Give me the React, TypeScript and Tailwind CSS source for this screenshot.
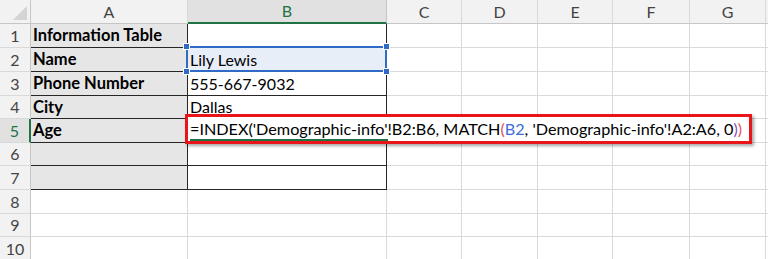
import React from "react";

const cols = ["A", "B", "C", "D", "E", "F", "G"];
const colW = [31, 157, 199, 75, 76, 75, 77, 76, 2];
const rowH = [24, 24, 24, 24, 23, 24, 23, 24, 24, 23, 24];

const aText: Record<number, string> = {
  1: "Information Table",
  2: "Name",
  3: "Phone Number",
  4: "City",
  5: "Age",
};
const bText: Record<number, string> = {
  2: "Lily Lewis",
  3: "555-667-9032",
  4: "Dallas",
};

const font = { fontFamily: "Lato, 'Liberation Sans', sans-serif" };

function Handle({ cls }: { cls: string }) {
  return <div className={`absolute w-[7px] h-[7px] bg-[#2f6bc6] border border-white ${cls}`} />;
}

export default function App() {
  const gridCols = colW.map((w) => `${w}px`).join(" ");
  const gridRows = rowH.map((h) => `${h}px`).join(" ");
  const cells: React.ReactNode[] = [];

  cells.push(
    <div key="corner" className="relative bg-[#f2f2f2] border-r border-b border-[#c6c6c6]">
      <div className="absolute right-[3px] bottom-[3px] w-0 h-0 border-l-[14px] border-l-transparent border-b-[14px] border-b-[#d4d4d4]" />
    </div>
  );
  for (let c = 0; c < 7; c++) {
    const sel = c === 1;
    cells.push(
      <div
        key={`h${c}`}
        className={`flex items-center justify-center text-[16px] border-r ${
          sel
            ? "bg-[#e1e1e1] text-[#217346] border-b-2 border-b-[#217346] border-r-[#c6c6c6]"
            : "bg-[#f2f2f2] text-[#444] border-b border-b-[#c6c6c6] border-r-[#d9d9d9]"
        }`}
      >
        {cols[c]}
      </div>
    );
  }
  cells.push(<div key="hx" className="bg-[#f2f2f2] border-b border-[#c6c6c6]" />);

  for (let r = 1; r <= 10; r++) {
    const sel = r === 5;
    cells.push(
      <div
        key={`r${r}`}
        className={`flex items-center justify-center text-[16px] border-b ${
          sel
            ? "bg-[#e1e1e1] text-[#217346] border-r-2 border-r-[#217346] border-b-[#d9d9d9]"
            : "bg-[#f2f2f2] text-[#444] border-r border-r-[#c6c6c6] border-b-[#d9d9d9]"
        }`}
      >
        {r}
      </div>
    );
    const inTable = r <= 7;
    cells.push(
      <div
        key={`a${r}`}
        className={`flex items-center pl-[2px] text-[16.5px] font-bold text-black whitespace-nowrap overflow-hidden ${
          inTable ? "bg-[#e7e6e6] border-r border-b border-[#262626]" : "border-r border-b border-[#dadada]"
        }`}
      >
        {aText[r] ?? ""}
      </div>
    );
    cells.push(
      <div
        key={`b${r}`}
        className={`flex items-center pl-[2px] text-[16px] text-black whitespace-nowrap ${
          inTable ? "border-r border-b border-[#262626]" : "border-r border-b border-[#dadada]"
        } ${r === 2 ? "bg-[#e8eef8]" : ""}`}
      >
        {bText[r] ?? ""}
      </div>
    );
    for (let c = 2; c < 7; c++) {
      cells.push(<div key={`c${r}-${c}`} className="border-r border-b border-[#dadada]" />);
    }
    cells.push(<div key={`x${r}`} className="border-b border-[#dadada]" />);
  }

  return (
    <div className="w-[768px] h-[259px] overflow-hidden bg-white relative" style={font}>
      <div className="grid" style={{ gridTemplateColumns: gridCols, gridTemplateRows: gridRows }}>
        {cells}
      </div>

      {/* selection B2 */}
      <div className="absolute left-[186px] top-[46px] w-[201px] h-[26px] border-2 border-[#2f6bc6] pointer-events-none">
        <Handle cls="-left-[5px] -top-[5px]" />
        <Handle cls="-right-[5px] -top-[5px]" />
        <Handle cls="-left-[5px] -bottom-[5px]" />
        <Handle cls="-right-[5px] -bottom-[5px]" />
      </div>

      {/* editing cell B5 with annotation */}
      <div className="absolute left-[185px] top-[114px] w-[567px] h-[30px] border-[3px] border-[#e8161b] bg-white shadow-[2px_2px_3px_rgba(0,0,0,0.35)]">
        <div className="absolute left-[2px] bottom-[0px] w-[198px] h-[2px] bg-[#217346]" />
        <div className="absolute left-[2px] top-[1px] text-[16.2px] leading-[22px] text-black whitespace-nowrap">
          =INDEX('Demographic-info'!B2:B6, MATCH<span className="text-[#e0525a]">(</span>
          <span className="text-[#3b6fd4]">B2</span>, 'Demographic-info'!A2:A6, 0
          <span className="text-[#8a4fc0]">)</span>
          <span className="text-[#e0525a]">)</span>
        </div>
      </div>
    </div>
  );
}
